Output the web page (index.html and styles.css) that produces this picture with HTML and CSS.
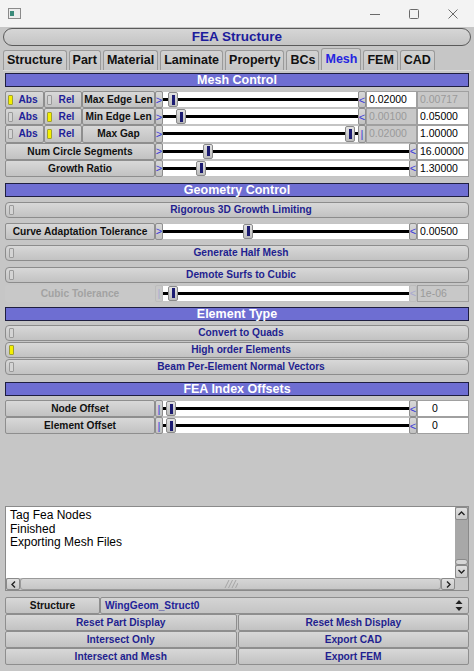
FILE: index.html
```html
<!DOCTYPE html>
<html lang="en">
<head>
<meta charset="utf-8">
<title>FEA Structure</title>
<link rel="stylesheet" href="styles.css">
</head>
<body>
<div class="titlebar">
  <svg class="appicon" width="13" height="11" viewBox="0 0 13 11"><rect x="0.5" y="0.5" width="12" height="10" fill="#ececec" stroke="#8a8a8a"/><rect x="2" y="3" width="4" height="5" fill="#3a8a7a"/></svg>
  <div class="winctl">
    <span><svg width="10" height="10" viewBox="0 0 10 10"><path d="M0 5.5H10" stroke="#6a6a6a" stroke-width="1"/></svg></span>
    <span><svg width="10" height="10" viewBox="0 0 10 10"><rect x="0.5" y="0.5" width="9" height="9" rx="1" fill="none" stroke="#6a6a6a"/></svg></span>
    <span><svg width="10" height="10" viewBox="0 0 10 10"><path d="M0.5 0.5L9.5 9.5M9.5 0.5L0.5 9.5" stroke="#6a6a6a"/></svg></span>
  </div>
</div>
<div class="app">
  <div class="apptitle">FEA Structure</div>
  <div class="tabs">
    <div class="tab">Structure</div>
    <div class="tab">Part</div>
    <div class="tab">Material</div>
    <div class="tab">Laminate</div>
    <div class="tab">Property</div>
    <div class="tab">BCs</div>
    <div class="tab sel">Mesh</div>
    <div class="tab">FEM</div>
    <div class="tab">CAD</div>
  </div>
  <div class="panel">
    <div class="hdr hdr-first">Mesh Control</div>
    <div class="rows">
      <div class="row">
        <div class="btn abs"><span class="lamp on"></span><span class="bt">Abs</span></div>
        <div class="btn rel"><span class="lamp"></span><span class="bt">Rel</span></div>
        <div class="btn lbl-s">Max Edge Len</div>
        <div class="btn arrow">&gt;</div>
        <div class="slider"><div class="thumb" style="left:5px"></div></div>
        <div class="btn arrow">&lt;</div>
        <div class="num mid">0.02000</div>
        <div class="num off">0.00717</div>
      </div>
      <div class="row">
        <div class="btn abs"><span class="lamp"></span><span class="bt">Abs</span></div>
        <div class="btn rel"><span class="lamp on"></span><span class="bt">Rel</span></div>
        <div class="btn lbl-s">Min Edge Len</div>
        <div class="btn arrow">&gt;</div>
        <div class="slider"><div class="thumb" style="left:13px"></div></div>
        <div class="btn arrow">&lt;</div>
        <div class="num mid off">0.00100</div>
        <div class="num">0.05000</div>
      </div>
      <div class="row">
        <div class="btn abs"><span class="lamp"></span><span class="bt">Abs</span></div>
        <div class="btn rel"><span class="lamp on"></span><span class="bt">Rel</span></div>
        <div class="btn lbl-s">Max Gap</div>
        <div class="btn arrow">&gt;</div>
        <div class="slider"><div class="thumb" style="left:182px"></div></div>
        <div class="btn arrow">|</div>
        <div class="num mid off">0.02000</div>
        <div class="num">1.00000</div>
      </div>
      <div class="row">
        <div class="btn lbl">Num Circle Segments</div>
        <div class="btn arrow">&gt;</div>
        <div class="slider"><div class="thumb" style="left:40px"></div></div>
        <div class="btn arrow">&lt;</div>
        <div class="num">16.00000</div>
      </div>
      <div class="row">
        <div class="btn lbl">Growth Ratio</div>
        <div class="btn arrow">&gt;</div>
        <div class="slider"><div class="thumb" style="left:33px"></div></div>
        <div class="btn arrow">&lt;</div>
        <div class="num">1.30000</div>
      </div>
    </div>

    <div class="hdr">Geometry Control</div>
    <div class="toggle t-first"><span class="lamp"></span><span class="tt">Rigorous 3D Growth Limiting</span></div>
    <div class="row single">
      <div class="btn lbl">Curve Adaptation Tolerance</div>
      <div class="btn arrow">&gt;</div>
      <div class="slider"><div class="thumb" style="left:80px"></div></div>
      <div class="btn arrow">&lt;</div>
      <div class="num">0.00500</div>
    </div>
    <div class="toggle"><span class="lamp"></span><span class="tt">Generate Half Mesh</span></div>
    <div class="toggle t-wide"><span class="lamp"></span><span class="tt">Demote Surfs to Cubic</span></div>
    <div class="row single tight dis">
      <div class="btn lbl">Cubic Tolerance</div>
      <div class="btn arrow">|</div>
      <div class="slider"><div class="thumb" style="left:5px"></div></div>
      <div class="btn arrow">&lt;</div>
      <div class="num off">1e-06</div>
    </div>

    <div class="hdr hdr-s">Element Type</div>
    <div class="toggle t-first2"><span class="lamp"></span><span class="tt">Convert to Quads</span></div>
    <div class="toggle t-stack"><span class="lamp on"></span><span class="tt">High order Elements</span></div>
    <div class="toggle t-stack"><span class="lamp"></span><span class="tt">Beam Per-Element Normal Vectors</span></div>

    <div class="hdr hdr-l">FEA Index Offsets</div>
    <div class="rows">
      <div class="row">
        <div class="btn lbl">Node Offset</div>
        <div class="btn arrow">|</div>
        <div class="slider"><div class="thumb" style="left:3px"></div></div>
        <div class="btn arrow">&lt;</div>
        <div class="num int">0</div>
      </div>
      <div class="row">
        <div class="btn lbl">Element Offset</div>
        <div class="btn arrow">|</div>
        <div class="slider"><div class="thumb" style="left:3px"></div></div>
        <div class="btn arrow">&lt;</div>
        <div class="num int">0</div>
      </div>
    </div>

    <div class="bottom">
      <div class="console">
        <div class="textarea">Tag Fea Nodes<br>Finished<br>Exporting Mesh Files</div>
        <div class="vscroll">
          <div class="sbtn"><svg width="7" height="5" viewBox="0 0 7 5"><path d="M0.5 4L3.5 1L6.5 4" fill="none" stroke="#222" stroke-width="1.4"/></svg></div>
          <div class="vtrack"><div class="vthumb"></div></div>
          <div class="sbtn"><svg width="7" height="5" viewBox="0 0 7 5"><path d="M0.5 1L3.5 4L6.5 1" fill="none" stroke="#222" stroke-width="1.4"/></svg></div>
        </div>
        <div class="hscroll">
          <div class="sbtn h"><svg width="5" height="7" viewBox="0 0 5 7"><path d="M4 0.5L1 3.5L4 6.5" fill="none" stroke="#222" stroke-width="1.4"/></svg></div>
          <div class="hthumb"><svg width="14" height="8" viewBox="0 0 14 8"><path d="M1 8L5 0M4.5 8L8.5 0M8 8L12 0M11.5 8L14 3" stroke="#9a9a9a" stroke-width="0.8"/></svg></div>
          <div class="sbtn h"><svg width="5" height="7" viewBox="0 0 5 7"><path d="M1 0.5L4 3.5L1 6.5" fill="none" stroke="#222" stroke-width="1.4"/></svg></div>
        </div>
        <div class="corner"></div>
      </div>
      <div class="selrow">
        <div class="btn sellbl">Structure</div>
        <div class="choice"><span>WingGeom_Struct0</span><svg width="8" height="11" viewBox="0 0 8 11"><path d="M4 0L7.5 4H0.5Z M4 11L7.5 7H0.5Z" fill="#222"/></svg></div>
      </div>
      <div class="actions">
        <div class="btn act">Reset Part Display</div>
        <div class="btn act">Reset Mesh Display</div>
        <div class="btn act">Intersect Only</div>
        <div class="btn act">Export CAD</div>
        <div class="btn act">Intersect and Mesh</div>
        <div class="btn act">Export FEM</div>
      </div>
    </div>
  </div>
</div>
</body>
</html>
```
FILE: styles.css
```css
* { box-sizing: border-box; }

body {
  margin: 0;
  width: 474px;
  height: 671px;
  overflow: hidden;
  background: #c6c6c6;
  font-family: "Liberation Sans", Arial, sans-serif;
  display: flex;
  flex-direction: column;
}

/* window title bar */
.titlebar {
  height: 27px;
  flex: none;
  background: #f3f3f3;
  display: flex;
  align-items: center;
  padding-left: 8px;
}
.winctl { margin-left: auto; margin-right: 2px; display: flex; }
.winctl span {
  width: 39px;
  height: 27px;
  display: flex;
  align-items: center;
  justify-content: center;
}

.app {
  flex: 1;
  display: flex;
  flex-direction: column;
  padding: 1px 3px 6px;
}

.apptitle {
  height: 18px;
  flex: none;
  border: 1px solid #5a5a5a;
  border-radius: 9px;
  background: linear-gradient(#d6d6d6, #c4c4c4);
  color: #1c1c9c;
  font-weight: bold;
  font-size: 13.5px;
  line-height: 16px;
  text-align: center;
}

/* tabs */
.tabs {
  display: flex;
  gap: 2px;
  align-items: flex-end;
  height: 24px;
  flex: none;
}
.tab {
  height: 20px;
  padding: 0 3px;
  border: 1px solid #9a9a9a;
  border-bottom: none;
  border-radius: 3px 3px 0 0;
  background: linear-gradient(#d2d2d2, #c6c6c6);
  font-size: 12.5px;
  font-weight: bold;
  line-height: 19px;
  color: #111;
}
.tab.sel {
  height: 22px;
  line-height: 20px;
  color: #2525e0;
  background: #cfcfcf;
}

.panel {
  flex: 1;
  display: flex;
  flex-direction: column;
  padding: 0 2px;
  border-top: 1px solid #dadada;
}

/* section headers */
.hdr {
  height: 14px;
  flex: none;
  margin-top: 6px;
  border: 1px solid #1e1e40;
  background: #6e6ed2;
  color: #fff;
  font-weight: bold;
  font-size: 12.5px;
  line-height: 12px;
  text-align: center;
}
.hdr-first { margin-top: 2px; }
.hdr-s { margin-top: 5px; }
.hdr-l { margin-top: 7px; }

/* parameter rows */
.rows { margin-top: 4px; display: flex; flex-direction: column; }
.row { display: flex; height: 17.2px; flex: none; }
.row.single { margin-top: 5px; height: 17px; }
.row.single.tight { margin-top: 2px; }

.btn {
  border: 1px solid #8e8e8e;
  border-radius: 2px;
  background: linear-gradient(#d8d8d8, #c2c2c2);
  display: flex;
  align-items: center;
  justify-content: center;
  font-size: 10.2px;
  font-weight: bold;
  color: #111;
  white-space: nowrap;
  flex: none;
}
.abs { width: 39px; }
.rel { width: 38px; }
.abs, .rel { justify-content: flex-start; padding-left: 2px; color: #1f1f99; }
.bt { flex: 1; text-align: center; }
.lbl-s { width: 73px; }
.lbl { width: 150px; }
.arrow {
  width: 8px;
  color: #3a3ad8;
  font-weight: normal;
  font-size: 11px;
}

.lamp {
  width: 5px;
  height: 10px;
  border: 1px solid #9a9a9a;
  border-radius: 1px;
  background: #d4d4d4;
  flex: none;
}
.lamp.on { background: #f4f000; border-color: #a0a030; }

.slider {
  flex: 1;
  position: relative;
  background: linear-gradient(#000, #000) center / 100% 3px no-repeat, #fff;
  border-top: 1px solid #c4c4c4;
  border-bottom: 1px solid #c4c4c4;
}
.thumb {
  position: absolute;
  top: 0;
  bottom: 0;
  width: 10px;
  border: 1px solid #8a8a8a;
  border-radius: 2px;
  background: linear-gradient(#e2e2e2, #bcbcbc);
  display: flex;
  align-items: center;
  justify-content: center;
}
.thumb::after {
  content: "";
  width: 3px;
  height: 10px;
  background: #1c1c72;
}

.num {
  width: 52px;
  flex: none;
  background: #fff;
  border: 1px solid #a0a0a0;
  font-size: 10.5px;
  line-height: 15px;
  padding-left: 2px;
  color: #000;
}
.num.mid { width: 51px; }
.num.off { background: #c8c8c8; color: #9a9a9a; }
.num.int { padding-left: 14px; }

.dis .lbl { background: #c8c8c8; border-color: #c8c8c8; color: #a2a2a2; }
.dis .arrow { color: #a8a8d0; background: #c8c8c8; border-color: #bcbcbc; }

/* toggle buttons */
.toggle {
  height: 16px;
  flex: none;
  margin-top: 5px;
  border: 1px solid #8c8c8c;
  border-radius: 4px;
  background: linear-gradient(#d8d8d8, #c2c2c2);
  display: flex;
  align-items: center;
  padding-left: 3px;
}
.t-wide { margin-top: 6px; }
.t-first2 { margin-top: 4px; }
.t-stack { margin-top: 1px; }
.tt {
  flex: 1;
  text-align: center;
  font-size: 10.2px;
  font-weight: bold;
  color: #1f1f8f;
}

/* bottom area */
.bottom { margin-top: auto; display: flex; flex-direction: column; }

.console {
  height: 85px;
  border: 1px solid #8a8a8a;
  display: grid;
  grid-template-columns: 1fr 13px;
  grid-template-rows: 1fr 12px;
}
.textarea {
  background: #fff;
  font-size: 12px;
  line-height: 13.5px;
  padding: 2px 4px;
  color: #000;
}
.vscroll {
  display: flex;
  flex-direction: column;
  background: #a8a8a8;
}
.sbtn {
  height: 13px;
  flex: none;
  background: linear-gradient(#e0e0e0, #c8c8c8);
  border: 1px solid #8a8a8a;
  border-radius: 2px;
  display: flex;
  align-items: center;
  justify-content: center;
}
.sbtn.h { width: 14px; height: 12px; }
.vtrack { flex: 1; display: flex; flex-direction: column; justify-content: flex-end; }
.vthumb {
  height: 6px;
  background: #d6d6d6;
  border: 1px solid #8a8a8a;
  border-radius: 3px;
}
.hscroll { display: flex; background: #c4c4c4; }
.hthumb {
  flex: 1;
  background: linear-gradient(#d6d6d6, #c6c6c6);
  border: 1px solid #9a9a9a;
  border-radius: 3px;
  display: flex;
  align-items: center;
  justify-content: center;
}
.corner { background: #c6c6c6; }

.selrow { display: flex; height: 17px; margin-top: 6px; }
.sellbl { width: 95px; color: #111; }
.choice {
  flex: 1;
  border: 1px solid #8e8e8e;
  border-radius: 2px;
  background: linear-gradient(#d4d4d4, #c4c4c4);
  display: flex;
  align-items: center;
  justify-content: space-between;
  padding: 0 5px 0 4px;
  font-size: 10.2px;
  font-weight: bold;
  color: #1f1f99;
}

.actions {
  display: grid;
  grid-template-columns: 1fr 1fr;
  column-gap: 1px;
}
.act { height: 17px; color: #1f1f8f; }
```
